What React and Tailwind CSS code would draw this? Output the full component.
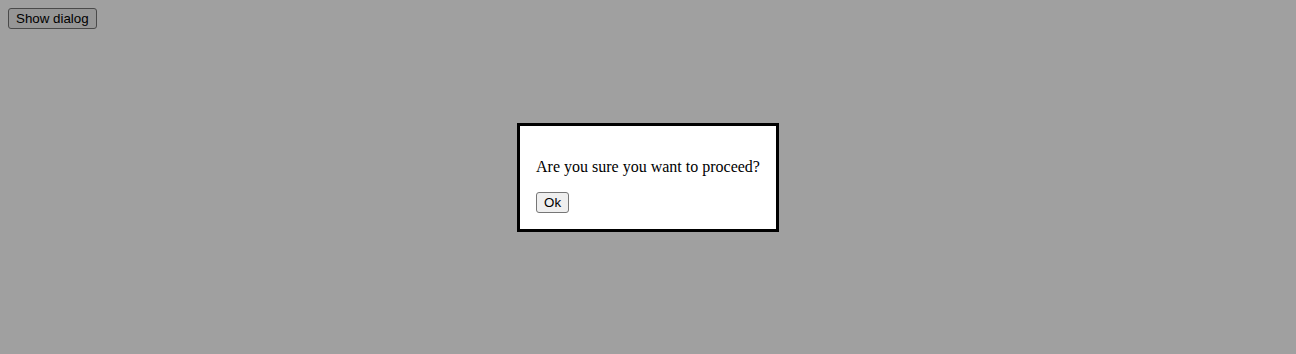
import React from "react";

function NativeButton({ children }) {
  return (
    <button
      type="button"
      className="bg-[#efefef] text-black border border-[#767676] rounded-[3px] px-[7px] py-[2px] text-[13.333px] leading-[15px] [font-family:'Liberation_Sans',Arial,sans-serif]"
    >
      {children}
    </button>
  );
}

export default function App() {
  return (
    <div className="relative w-full h-[354px] bg-white [font-family:'Liberation_Serif','Times_New_Roman',serif]">
      <div className="p-2 flex items-start">
        <NativeButton>Show dialog</NativeButton>
      </div>
      <div className="fixed inset-0 bg-black/[0.372] flex items-center justify-center">
        <div className="bg-white border-[3px] border-black p-4 text-black">
          <p className="my-4 text-base leading-[18px]">Are you sure you want to proceed?</p>
          <div className="flex items-start">
            <NativeButton>Ok</NativeButton>
          </div>
        </div>
      </div>
    </div>
  );
}
